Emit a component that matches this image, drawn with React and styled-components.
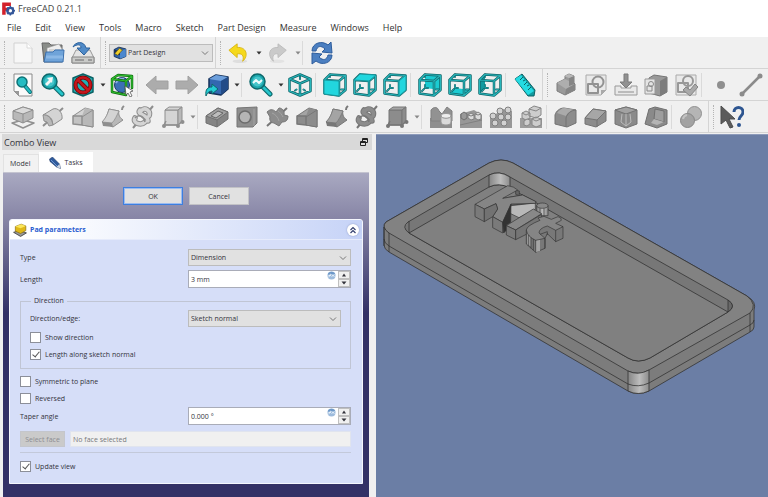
import React from 'react'
import styled, { createGlobalStyle, css } from 'styled-components'

const GlobalStyle = createGlobalStyle`
  *, *::before, *::after {
    box-sizing: border-box;
  }

  body {
    margin: 0;
    font-family: 'Open Sans', 'Noto Sans', sans-serif;
    font-size: 7px;
    color: #33333b;
    background-color: #f0f0f0;
  }

  button, input, select {
    margin: 0;
    font: inherit;
    color: inherit;
  }
`

const Window = styled.div`
  display: flex;
  flex-direction: column;
  min-height: 100vh;
`

const TitleBar = styled.header`
  display: flex;
  align-items: center;
  gap: 3px;
  height: 18px;
  padding-left: 1px;
  background-color: #fff;
`

const Title = styled.h1`
  margin: 0;
  font-size: 9px;
  font-weight: 400;
  line-height: 12px;
  color: #444;
`

const MenuBar = styled.nav`
  display: flex;
  height: 19px;
  background-color: #fff;
`

const MenuItem = styled.button`
  padding: 0 7px;
  border: 0;
  background: none;
  font-size: 9px;
  line-height: 18px;
  color: #333;
`

const ToolRow = styled.div`
  display: flex;
  height: 32px;
  border-bottom: 1px solid #d4d4d4;
  background-color: #f0f0f0;
`

const ToolGroup = styled.div`
  display: flex;
  align-items: center;
  padding-right: 2px;
  border-right: 1px solid #d4d4d4;

  &:last-child {
    border-right: 0;
  }
`

const Handle = styled.span`
  width: 8px;
  height: 24px;

  &::before {
    content: '';
    display: block;
    width: 1px;
    height: 24px;
    margin-left: 4px;
    border-left: 1px dotted #b4b4b4;
  }
`

const Divider = styled.span`
  width: 5px;
  height: 24px;
  border-left: 1px solid #dadada;
`

const Tool = styled.button`
  display: flex;
  align-items: center;
  justify-content: center;
  width: 30px;
  height: 30px;
  padding: 0;
  border: 0;
  background: none;
`

const DropButton = styled.button`
  display: flex;
  align-items: center;
  justify-content: center;
  width: 9px;
  height: 24px;
  padding: 0;
  border: 0;
  background: none;
  color: ${({ $muted }) => ($muted ? '#888' : '#333')};
`

const Workbench = styled.label`
  display: grid;
  align-items: center;
  width: 104px;
  height: 18px;

  > * {
    grid-area: 1 / 1;
  }

  > svg {
    pointer-events: none;
    margin-left: 4px;
  }

  > svg:last-child {
    justify-self: end;
    margin-right: 4px;
  }
`

const selectBox = css`
  width: 100%;
  height: 100%;
  border: 1px solid #bcbcbc;
  border-radius: 0;
  background-color: #e1e1e1;
  appearance: none;
`

const WorkbenchSelect = styled.select`
  ${selectBox}
  padding: 0 16px 0 18px;
`

const Main = styled.main`
  display: flex;
  flex: 1;
`

const Dock = styled.aside`
  display: flex;
  flex-direction: column;
  flex: none;
  width: 376px;
  padding: 1px 4px 0 2px;
`

const DockTitle = styled.div`
  display: flex;
  align-items: center;
  justify-content: space-between;
  height: 16px;
  padding: 0 4px 0 2px;
  background-color: #d9d9d9;
  font-size: 9px;
`

const FloatButton = styled.button`
  display: flex;
  padding: 0;
  border: 0;
  background: none;
`

const TabList = styled.div`
  display: flex;
  align-items: flex-end;
  height: 22px;
  padding-left: 1px;
`

const Tab = styled.button`
  display: flex;
  align-items: center;
  gap: 4px;
  height: ${({ $active }) => ($active ? 20 : 18)}px;
  padding: ${({ $active }) => ($active ? '0 9px' : '0 7px 0 6px')};
  border: 1px solid ${({ $active }) => ($active ? '#fff' : '#e2e2e2')};
  border-bottom: 0;
  background-color: ${({ $active }) => ($active ? '#fff' : '#f2f2f2')};
`

const TaskPanel = styled.section`
  flex: 1;
  margin: 0 3px 0 1px;
  padding: 14px 6px 12px;
  border-top: 1px solid #c4c4d0;
  background: linear-gradient(#a9a9c1 0, #8280a2 52px, #333166 140px);
`

const Buttons = styled.div`
  display: flex;
  justify-content: center;
  gap: 6px;
  margin-bottom: 14px;
`

const PushButton = styled.button`
  width: 60px;
  height: 18px;
  padding: 0;
  border: ${({ $primary }) => ($primary ? '1px solid #3d7fe0' : '1px solid #c2c2c6')};
  box-shadow: ${({ $primary }) => ($primary ? 'inset 0 0 0 1px #9cbcf0' : 'none')};
  background-color: #e1e1e1;
`

const Card = styled.div`
  border: 1px solid #f4f6fd;
  border-radius: 3px 3px 0 0;
  background-color: #d6def8;
`

const CardHeader = styled.div`
  display: flex;
  align-items: center;
  gap: 3px;
  height: 20px;
  padding: 0 3px;
  border-radius: 2px 2px 0 0;
  background: linear-gradient(90deg, #fff 10%, #c6d3f7);
  border-bottom: 1px solid #e6ebfb;
`

const CardTitle = styled.h2`
  flex: 1;
  margin: 0;
  font-size: 7px;
  font-weight: 700;
  color: #2a5cd0;
`

const CollapseButton = styled.button`
  display: flex;
  align-items: center;
  justify-content: center;
  width: 12px;
  height: 12px;
  padding: 0;
  border: 0;
  border-radius: 50%;
  background-color: #fff;
  box-shadow: 0 0 2px #8b98c4;
`

const Form = styled.form`
  padding: 9px 11px 8px 10px;
`

const Field = styled.div`
  display: grid;
  grid-template-columns: ${({ $inset }) => ($inset ? 158 : 168)}px 1fr;
  align-items: center;
  height: ${({ $tall }) => ($tall ? 18 : 17)}px;
  margin-bottom: ${({ $gap = 0 }) => $gap}px;
`

const SelectWrap = styled.div`
  display: grid;
  align-items: center;
  height: 17px;

  > * {
    grid-area: 1 / 1;
  }

  > svg {
    justify-self: end;
    margin-right: 4px;
    pointer-events: none;
  }
`

const Select = styled.select`
  ${selectBox}
  padding: 0 14px 0 2px;
`

const SpinBox = styled.div`
  display: flex;
  height: 18px;
  border: 1px solid #a9acb8;
  background-color: #fff;
`

const SpinInput = styled.input`
  flex: 1;
  min-width: 0;
  padding: 0 2px;
  border: 0;
  outline: 0;
  background: none;
`

const Stepper = styled.div`
  display: flex;
  flex-direction: column;
  width: 12px;
  margin-left: 2px;
`

const StepButton = styled.button`
  display: flex;
  flex: 1;
  align-items: center;
  justify-content: center;
  padding: 0;
  border: 1px solid #c0c0c0;
  background-color: #f0f0f0;
`

const Group = styled.fieldset`
  min-width: 0;
  margin: 8px 0 4px;
  padding: 4px 9px 5px;
  border: 1px solid #c0c5d4;
`

const Legend = styled.legend`
  margin-left: 1px;
  padding: 0 3px;
  line-height: 10px;
`

const CheckLabel = styled.label`
  display: flex;
  align-items: center;
  gap: 4px;
  height: 17px;
`

const CheckBox = styled.input`
  display: flex;
  align-items: center;
  justify-content: center;
  width: 11px;
  height: 11px;
  border: 1px solid #8c8f99;
  background-color: #fff;
  appearance: none;

  &:checked::after {
    content: '';
    width: 4px;
    height: 7px;
    margin-bottom: 2px;
    border: solid #555;
    border-width: 0 1px 1px 0;
    transform: rotate(40deg);
  }
`

const FaceRow = styled.div`
  display: flex;
  gap: 5px;
  height: 16px;
  margin-bottom: 5px;
`

const FaceButton = styled.button`
  width: 45px;
  padding: 0;
  border: 1px solid #c4c6cc;
  background-color: #cacaca;
  color: #8d8d92;
`

const FaceInput = styled.input`
  flex: 1;
  min-width: 0;
  padding: 0 2px;
  border: 1px solid #e0e4ee;
  background-color: #f0f0f0;

  &::placeholder {
    color: #77777c;
  }
`

const Rule = styled.hr`
  margin: 0 0 5px;
  border: 0;
  border-top: 1px solid #c3c9da;
`

const Viewport = styled.section`
  flex: 1;
  min-width: 0;
  margin-top: 1px;
  border-top: 1px solid #8d9bbb;
  background-color: #6b7ea5;

  > svg {
    display: block;
    width: 100%;
    height: auto;
  }
`

const Svg = ({ size = 24, children }) => (
  <svg width={ size } height={ size } viewBox="0 0 24 24" fill="none" strokeLinejoin="round" aria-hidden="true">
    { children }
  </svg>
)

const Chevron = () => (
  <svg width="8" height="8" viewBox="0 0 8 8" fill="none" stroke="#777" aria-hidden="true">
    <path d="M1 2.5 4 5.5 7 2.5" />
  </svg>
)

const Triangle = ({ up }) => (
  <svg width="6" height="4" viewBox="0 0 6 4" fill="currentColor" aria-hidden="true">
    <path d={ up ? 'M1 3.5 3 .5 5 3.5z' : 'M.5.5h5L3 3.5z' } />
  </svg>
)

const FormulaIcon = () => (
  <svg width="9" height="9" viewBox="0 0 9 9" fill="none" aria-hidden="true">
    <circle cx="4.5" cy="4.5" r="4" fill="#9dbbdc" />
    <path d="M.7 3.5a4 4 0 0 1 7.6 0z" fill="#6d98c8" />
    <path d="M1.5 6c1.5 0 1-3 2.500-3M1.500 4.500h2.500M4.500 3.500l3 2M7.500 3.500l-3 2" stroke="#e9f2fb" strokeWidth=".9" />
  </svg>
)

// Outlined strokes: dark edge with a brighter core on top
const Line = ({ d, dark = '#10666a', light = '#27b5ba', width = 2.5, core = 1.2 }) => (
  <>
    <path d={ d } stroke={ dark } strokeWidth={ width } strokeLinecap="round" />
    <path d={ d } stroke={ light } strokeWidth={ core } strokeLinecap="round" />
  </>
)

const cubeFaces = {
  front: 'M1 7 16 8V23L1 21z',
  top: 'M1 7 7 1 23 2 16 8z',
  right: 'M16 8 23 2V17L16 23z',
  rear: 'M7 1 23 2V17L7 15z',
  bottom: 'M1 21 7 15 23 17 16 23z',
  left: 'M1 7 7 1V15L1 21z',
}

const CubeView = ({ face }) => {
  const behind = ['rear', 'bottom', 'left'].includes(face)
  return (
    <Svg>
      { behind && <path d={ cubeFaces[face] } fill={ face === 'left' ? '#129aa0' : '#1ccbd2' } /> }
      <Line d="M7 1.500V4M7 12V15H10M4 18 6 16M18 16.500H21" width={ 1.8 } core={ .8 } />
      <Line d="M1.500 7 16 8V22.500L1.500 20.500zM1.500 7 7 1.500 22.500 2.500 16 8M22.500 2.500V17L16 22.500" />
      { !behind && <path d={ cubeFaces[face] } fill="#22d6de" stroke="#17979c" /> }
    </Svg>
  )
}

const Magnifier = ({ children }) => (
  <>
    <path d="m14 14 7 7" stroke="#0d686b" strokeWidth="5" strokeLinecap="round" />
    <path d="m14 14 7 7" stroke="#25c4ca" strokeWidth="2.800" strokeLinecap="round" />
    <circle cx="8.500" cy="8.500" r="7.500" fill="#1ba7ad" stroke="#0d686b" strokeWidth="1.500" />
    <circle cx="8.500" cy="8.500" r="5" fill="#45c5ca" />
    { children }
  </>
)

// Part features: additive tools are light, subtractive ones dark
const tone = dark => (dark ? ['#a4a4a4', '#8c8c8c', '#777'] : ['#d4d4d4', '#b8b8b8', '#8e8e8e'])

const Revolution = ({ dark }) => {
  const [a, b, c] = tone(dark)
  return (
    <Svg>
      <path d="M2 21 22 3" stroke={ c } strokeWidth="2" />
      { dark ? (
        <>
          <path d="M2 7c4-4 7-2 9 0l3-4c3 0 6 3 5 7l4 1c0 5-3 6-6 6l-3 4-5-3c-3 0-5-3-4-6z" fill={ b } stroke={ c } />
          <path d="M7 8c3 1 6 4 7 8M13 6c2 1 4 4 5 6" stroke={ a } />
        </>
      ) : (
        <>
          <path d="M2 10 12 4c5-2 10 4 9 10l-9 6-1-5c-2-4-5-5-9-5z" fill={ a } stroke={ c } />
          <path d="M2 10c5-1 9 4 10 10l-4 1-2-4-3-1z" fill={ b } stroke={ c } />
        </>
      ) }
    </Svg>
  )
}

const Loft = ({ dark }) => {
  const [a, b, c] = tone(dark)
  return (
    <Svg>
      <path d="m2 11 12-8 8 2v17l-11-2z" fill={ a } stroke={ c } />
      <path d="m11 11 3-8 8 2v17l-11-3z" fill={ b } />
      <path d="m2 11 9 1 11-7v17l-11-2z" stroke={ c } />
      <path d="M2 11h9v9l-9-1z" fill={ dark ? b : '#c2c2c2' } stroke={ c } strokeWidth="1.500" />
    </Svg>
  )
}

const Pipe = ({ dark }) => {
  const [a, b, c] = tone(dark)
  return (
    <Svg>
      <path d="M1 17C6 13 7 7 8 4l10 2c-1 4 1 7 4 9l-10 7z" fill={ b } stroke={ c } />
      <path d="M8 4c-1 4-3 9-7 13l10 1c3-3 5-8 7-12z" fill={ a } stroke={ c } strokeWidth=".8" />
      <path d="m1 17 1 4 10 1-1-4z" fill={ c } />
      <path d="M21 5c0-3 1-3 2-4" stroke={ c } strokeWidth="2" />
    </Svg>
  )
}

const Helix = ({ dark }) => {
  const [a, b, c] = tone(dark)
  return (
    <Svg>
      <path d="m2 23 5-6M17 7l5-6" stroke={ c } strokeWidth="2" />
      <path d="M4 13c-3 5 6 8 10 4M9 5c-4 5 8 4 8 11M10 6c4-5 10 0 8 5" stroke={ c } strokeWidth="5.500" strokeLinecap="round" />
      <path d="M4 13c-3 5 6 8 10 4M9 5c-4 5 8 4 8 11M10 6c4-5 10 0 8 5" stroke={ dark ? b : a } strokeWidth="3.500" strokeLinecap="round" />
      <path d="M4 13c4-5 9-1 10 4" stroke={ c } strokeWidth="1.500" />
    </Svg>
  )
}

const Primitive = ({ dark }) => {
  const [a, b, c] = tone(dark)
  return (
    <Svg>
      <path d="M4 5h13v15H4z" fill={ dark ? b : a } stroke={ c } />
      <path d="m4 5 4-3h13l-4 3z" fill={ a } stroke={ c } />
      <path d="m17 5 4-3v14l-4 4z" fill={ b } stroke={ c } />
      <path d="M3 20h14l5-4M3 20l2-4" stroke={ c } strokeWidth="1.500" />
      <g fill={ c }>
        <circle cx="3" cy="21" r="2" />
        <circle cx="17" cy="21" r="2" />
        <circle cx="21.500" cy="17" r="2" />
      </g>
    </Svg>
  )
}

const icons = {
  newFile: (
    <Svg>
      <path d="M3 2h13l5 5v15H3z" fill="#f7f7f7" stroke="#d2d2d2" />
      <path d="M16 2v5h5" fill="#fff" stroke="#dadada" />
    </Svg>
  ),
  open: (
    <Svg>
      <path d="M1 2h7l2 2h11v17H3z" fill="#8a8d89" stroke="#666" />
      <path d="m6 7 12-4 3 5v9H6z" fill="#eee" stroke="#999" strokeWidth=".6" />
      <path d="M8 9h11M8 11h10" stroke="#bbb" />
      <path d="M5 11h7l2-2h9l-1 12H3z" fill="#6fa3d9" stroke="#3c70ad" />
      <path d="M5 16h17" stroke="#8cb8e6" strokeWidth="3" />
    </Svg>
  ),
  save: (
    <Svg>
      <path d="m5 9-4 8v5h22v-5l-4-8z" fill="#e4e4e4" stroke="#999" />
      <path d="M1 16h22v6H1z" fill="#c9cac8" stroke="#858585" />
      <path d="M4 19h9M17 19h4" stroke="#8a8a8a" strokeWidth="1.500" />
      <path d="M2 6C4 1 13-1 15 7h4l-6 7-7-7h4C10 3 6 3 2 6z" fill="#4f8ac8" stroke="#2d629d" />
    </Svg>
  ),
  partDesign: (
    <Svg size={ 14 }>
      <path d="m2 6 8-4 12 3v13l-10 4L2 18z" fill="#2f62a8" stroke="#122d54" strokeWidth="1.500" />
      <path d="m12 9 10-4v13l-10 4z" fill="#4b88d0" />
      <path d="M2 6 12 9v7L2 13z" fill="#1d3157" />
      <path d="m3 13 8-9 5 3-8 9z" fill="#f0cf2a" stroke="#5b4c07" />
    </Svg>
  ),
  undo: (
    <Svg size={ 22 }>
      <ellipse cx="13" cy="21" rx="8" ry="2" fill="#dedede" />
      <path d="M1 9 10 2v4c10-1 13 9 6 15 2-6-1-9-6-8v4z" fill="#f5d91c" stroke="#d9b512" />
    </Svg>
  ),
  redo: (
    <Svg size={ 22 }>
      <ellipse cx="11" cy="21" rx="8" ry="2" fill="#e3e3e3" />
      <path d="m21 9-9-7v4C2 5 0 15 7 21c-2-6 1-9 5-8v4z" fill="#cacaca" stroke="#bbb" />
    </Svg>
  ),
  refresh: (
    <Svg>
      <path d="M2 10C2 2 12-1 18 4l3-3 1 11-10-1 3-3C11 4 7 5 6 10z" fill="#4b7fc1" stroke="#2e5d9c" />
      <path d="M22 14c0 8-10 11-16 6l-4 3V12l10 1-3 3c4 4 8 3 9-2z" fill="#4b7fc1" stroke="#2e5d9c" />
    </Svg>
  ),
  fitAll: (
    <Svg>
      <path d="M3 1h18v22H8l-5-5z" fill="#fafafa" stroke="#8a8a8a" />
      <path d="M3 18h5v5z" fill="#999" />
      <path d="m14 13 5 6" stroke="#0d7478" strokeWidth="4" strokeLinecap="round" />
      <path d="m14 13 5 6" stroke="#24bcc2" strokeWidth="2" strokeLinecap="round" />
      <circle cx="11" cy="9" r="5" fill="#26bcc2" stroke="#0d7478" strokeWidth="1.500" />
    </Svg>
  ),
  fitSelection: (
    <Svg>
      <Magnifier>
        <path d="m4 11 4-4-2-2 6-1-1 6-1-1-4 4z" fill="#f5f5f5" />
      </Magnifier>
    </Svg>
  ),
  drawStyle: (
    <Svg>
      <path d="m12 1 10 4v14l-10 4L2 19V5z" fill="#22aeb4" stroke="#0c6265" strokeWidth="1.500" />
      <circle cx="12" cy="12" r="7.500" stroke="#700" strokeWidth="4" />
      <path d="m6.500 6.500 11 11" stroke="#700" strokeWidth="4" />
      <circle cx="12" cy="12" r="7.500" stroke="#c4161c" strokeWidth="2.500" />
      <path d="m6.500 6.500 11 11" stroke="#c4161c" strokeWidth="2.500" />
    </Svg>
  ),
  boundingBox: (
    <Svg>
      <circle cx="12" cy="12" r="7.500" fill="#3b6fb5" stroke="#1f3f6c" />
      <path d="M6 10a7 7 0 0 1 8-4" stroke="#8ab0e0" strokeWidth="2" />
      <Line d="M2 6 16 8V22L2 19zM2 6 8 2 22 3 16 8M22 3V15" dark="#0f6a10" light="#2fc02f" />
      <path d="m15 13 8 5-3 1 2 4-2 1-2-4-2 2z" fill="#fff" stroke="#555" strokeWidth=".8" />
    </Svg>
  ),
  back: (
    <Svg><path d="M1 12 11 3v5h12v8H11v5z" fill="#acacac" stroke="#a0a0a0" /></Svg>
  ),
  forward: (
    <Svg><path d="M23 12 13 3v5H1v8h12v5z" fill="#acacac" stroke="#a0a0a0" /></Svg>
  ),
  linkGo: (
    <Svg>
      <path d="m4 6 7-4 12 2v12l-7 6-12-2z" fill="#3368b0" stroke="#142f57" strokeWidth="1.500" />
      <path d="m4 6 7-4 12 2-7 4z" fill="#6c9fdc" />
      <path d="m16 8 7-4v12l-7 6z" fill="#234c88" />
      <path d="M1 23c-1-7 2-9 6-9v-3l6 5-6 5v-3c-3 0-5 2-6 5z" fill="#24cdd4" stroke="#0e686b" />
    </Svg>
  ),
  zoom: (
    <Svg>
      <Magnifier>
        <path d="M4 10 7 7l3 3 3-3" stroke="#eafcfc" strokeWidth="2" />
      </Magnifier>
    </Svg>
  ),
  isometric: (
    <Svg>
      <Line d="M12 2V6M7 17.500l1.500-1M17 17.500l-1.500-1" width={ 2 } core={ .8 } />
      <Line d="m12 1.500 10.500 4.500v12l-10.500 4.500L1.500 18V6zM1.500 6l10.500 4.500 10.500-4.500M12 10.500v12" />
    </Svg>
  ),
  measure: (
    <Svg>
      <path d="M2 6 9 1l13 16-1 6h-6z" fill="#129aa0" stroke="#0c6265" />
      <path d="M2 6 8 2l13 16-6 4z" fill="#25dbe2" />
      <path d="m10 4-3 3M12 7l-2 1M14 9l-3 3M16 12l-2 1M18 14l-3 3" stroke="#0c6265" />
    </Svg>
  ),
  body: (
    <Svg>
      <path d="m3 10 8-4V3l4-2 5 2v7l1 1v6l-10 5-8-4z" fill="#999" stroke="#7d7d7d" />
      <path d="m3 10 8-4 4 2v5l6-2-9 5z" fill="#aeaeae" />
      <path d="m12 16 9-5v6l-10 5zM15 5l5-2v8l-5 2z" fill="#858585" />
      <path d="m10 3 5-2 5 2-5 2z" fill="#b8b8b8" />
    </Svg>
  ),
  newSketch: (
    <Svg>
      <path d="M2 2h20v15l-5 5H2z" fill="#e9e9e9" stroke="#aaa" />
      <circle cx="14" cy="9" r="5.500" stroke="#929292" strokeWidth="2" />
      <path d="M4 11h10v9H4z" stroke="#929292" strokeWidth="2" />
      <path d="M17 22v-5h5z" fill="#aaa" />
    </Svg>
  ),
  editSketch: (
    <Svg>
      <path d="M1 13h6v2h10v-2h6v9H1z" fill="#e9e9e9" stroke="#999" />
      <path d="M4 19h16" stroke="#bbb" strokeWidth="2" />
      <path d="M10 1h4v8h4l-6 6-6-6h4z" fill="#919191" stroke="#7b7b7b" />
    </Svg>
  ),
  mapSketch: (
    <Svg>
      <path d="m5 5 5-3 13 2v15l-7 4-11-3z" fill="#999" stroke="#757575" />
      <path d="m16 8 7-4v15l-7 4z" fill="#7c7c7c" />
      <path d="M1 6h10v15H1z" fill="#e4e4e4" stroke="#999" />
      <circle cx="7" cy="11" r="2.500" stroke="#888" />
      <path d="M3 13h5v5H3z" stroke="#888" />
    </Svg>
  ),
  validateSketch: (
    <Svg>
      <path d="M2 2h20v20H2z" fill="#e9e9e9" stroke="#aaa" />
      <circle cx="14" cy="8" r="5" stroke="#989898" strokeWidth="2" />
      <path d="M4 10h10v9H4z" stroke="#989898" strokeWidth="2" />
      <path d="m9 17 3-3 4 3 5-6 3 3-8 9z" fill="#a9a9a9" stroke="#858585" />
    </Svg>
  ),
  point: (
    <Svg><circle cx="12" cy="12" r="4" fill="#8f8f8f" /></Svg>
  ),
  line: (
    <Svg>
      <path d="M3 21 21 3" stroke="#8b8b8b" strokeWidth="2.500" />
      <circle cx="3" cy="21" r="2.500" fill="#8b8b8b" />
      <circle cx="21" cy="3" r="2.500" fill="#8b8b8b" />
    </Svg>
  ),
  pad: (
    <Svg>
      <path d="m1 18 11-3 11 3-11 5z" fill="#f0f0f0" stroke="#909090" strokeWidth="1.500" />
      <path d="m2 6 10-4 10 3v8l-10 5-10-4z" fill="#b8b8b8" stroke="#8e8e8e" />
      <path d="m2 6 10-4 10 3-10 4z" fill="#dadada" stroke="#8e8e8e" />
      <path d="M12 9v9" stroke="#8e8e8e" />
    </Svg>
  ),
  pocket: (
    <Svg>
      <path d="m1 11 12-8 10 4v7l-11 8-11-4z" fill="#858585" stroke="#707070" />
      <path d="m1 11 12-8 10 4-11 8z" fill="#a0a0a0" stroke="#707070" />
      <path d="m6 11 7-5 5 2-7 5z" fill="#bcbcbc" stroke="#666" />
      <path d="M12 15v7" stroke="#707070" />
    </Svg>
  ),
  hole: (
    <Svg>
      <path d="m2 3 20-1v16l-4 4H2z" fill="#8e8e8e" stroke="#757575" />
      <path d="M19 4v17" stroke="#a2a2a2" />
      <circle cx="10" cy="12" r="6" fill="#b5b5b5" stroke="#6c6c6c" strokeWidth="1.500" />
      <path d="M13 7a6 6 0 0 1 0 10 8 8 0 0 0 0-10z" fill="#757575" />
    </Svg>
  ),
  mirror: (
    <Svg>
      <path d="M1 13h22v10H1z" fill="#8e8e8e" />
      <path d="M2 5c3-4 7-3 8 1l3 3 5-7 5 4v10H2z" fill="#929292" stroke="#808080" />
      <ellipse cx="17" cy="11" rx="5" ry="2.500" fill="#eee" stroke="#999" />
      <path d="M12 11v6c0 4 10 4 10 0v-6c0 3-10 3-10 0z" fill="#dadada" stroke="#999" />
    </Svg>
  ),
  linear: (
    <Svg>
      <path d="M1 9 15 5l8 5v13H1z" fill="#979797" />
      <path d="m1 20 22-5" stroke="#808080" />
      <path d="m2 9 3-2 3 2v4l-3 2-3-2z" fill="#999" stroke="#6f6f6f" />
      <g fill="#dadada" stroke="#808080">
        <path d="m9 10 3-2 3 2v4l-3 1-3-2zM16 9l3-2 3 2v5l-3 1-3-2z" />
        <path d="m9 10 3 1 3-1M16 9l3 1 3-1" />
      </g>
    </Svg>
  ),
  polar: (
    <Svg>
      <path d="m1 13 13-9 9 2v17H1z" fill="#979797" />
      <g fill="#d2d2d2" stroke="#808080">
        <circle cx="4" cy="11" r="3" /><circle cx="11" cy="6" r="3" /><circle cx="19" cy="5" r="3" />
        <circle cx="12" cy="12" r="3" /><circle cx="19" cy="12" r="3" /><circle cx="6" cy="18" r="3" />
        <circle cx="15" cy="18" r="3" />
      </g>
    </Svg>
  ),
  multi: (
    <Svg>
      <path d="M1 13h22v10H1z" fill="#9d9d9d" />
      <g fill="#cdcdcd" stroke="#868686">
        <path d="m10 4 5-3 7 2v7l-5 3-7-2zM3 8l4-2 4 2v5l-4 2-4-2zM13 14l4-2 5 2v6l-5 2-4-2z" />
        <path d="m10 4 7 2 5-3M3 8l4 2 4-2M13 14l4 2 5-2" />
        <path d="m5 16 3-2 3 1v4l-3 2-3-1z" />
      </g>
    </Svg>
  ),
  fillet: (
    <Svg>
      <path d="M1 10c1-4 5-7 9-7l12 2v13l-9 4-12-3z" fill="#8c8c8c" stroke="#737373" />
      <path d="M3 8c2-3 5-5 8-5l10 2c-4 0-8 3-9 6z" fill="#aaa" />
      <path d="M12 22V13c1-4 5-8 10-8" stroke="#737373" />
    </Svg>
  ),
  chamfer: (
    <Svg>
      <path d="m1 13 8-9 13 2v10l-10 6-11-3z" fill="#8c8c8c" stroke="#737373" />
      <path d="m1 13 8-9 13 2-9 9z" fill="#a6a6a6" stroke="#737373" />
      <path d="M13 15v7" stroke="#737373" />
    </Svg>
  ),
  draft: (
    <Svg>
      <path d="m1 5 11-3 11 3v14l-11 4-11-4z" fill="#8a8a8a" stroke="#737373" />
      <path d="m1 5 11-3 11 3-11 4z" fill="#a2a2a2" stroke="#737373" />
      <path d="M12 9v12M8 9l-1 8M16 9l1 8M7 17l5 4 5-4" stroke="#bcbcbc" />
    </Svg>
  ),
  thickness: (
    <Svg>
      <path d="m5 4 6-2 12 3v14l-10 4-12-4z" fill="#8a8a8a" stroke="#707070" />
      <path d="m11 4-1 10 10 3V6z" fill="#9e9e9e" stroke="#707070" />
      <path d="m10 14-3 4 6 2 7-3z" fill="#b4b4b4" />
    </Svg>
  ),
  boolean: (
    <Svg>
      <circle cx="15.500" cy="8.500" r="7" fill="#b5b5b5" stroke="#909090" />
      <circle cx="8.500" cy="15.500" r="7" fill="#a2a2a2" stroke="#868686" />
      <path d="M4 14a5 5 0 0 1 4-4" stroke="#c2c2c2" strokeWidth="2" />
    </Svg>
  ),
  whatsThis: (
    <Svg>
      <path d="M1 1 15 14H9l4 8-3 1-4-8-5 4z" fill="#5c5c5c" stroke="#4c4c4c" />
      <path d="M14 7c0-6 9-6 9 0 0 4-4 4-4 8" stroke="#2d5590" strokeWidth="3" />
      <circle cx="19" cy="20" r="2" fill="#2d5590" />
    </Svg>
  ),
}

const menus = ['File', 'Edit', 'View', 'Tools', 'Macro', 'Sketch', 'Part Design', 'Measure', 'Windows', 'Help']

const viewTools = [
  ['Fit all', icons.fitAll],
  ['Fit selection', icons.fitSelection],
  ['Draw style', icons.drawStyle],
  'drop',
  ['Bounding box', icons.boundingBox],
  'divider',
  ['Go back', icons.back],
  ['Go forward', icons.forward],
  ['Go to linked object', icons.linkGo],
  'drop',
  'divider',
  ['Zoom', icons.zoom],
  'drop',
  ['Isometric', icons.isometric],
  'divider',
  ['Front', <CubeView face="front" />],
  ['Top', <CubeView face="top" />],
  ['Right', <CubeView face="right" />],
  'divider',
  ['Rear', <CubeView face="rear" />],
  ['Bottom', <CubeView face="bottom" />],
  ['Left', <CubeView face="left" />],
  'divider',
  ['Measure distance', icons.measure],
]

const sketchTools = [
  ['Create body', icons.body],
  ['Create sketch', icons.newSketch],
  ['Edit sketch', icons.editSketch],
  ['Map sketch', icons.mapSketch],
  ['Validate sketch', icons.validateSketch],
  'divider',
  ['Datum point', icons.point],
  ['Datum line', icons.line],
]

const featureTools = [
  ['Pad', icons.pad],
  ['Revolution', <Revolution />],
  ['Additive loft', <Loft />],
  ['Additive pipe', <Pipe />],
  ['Additive helix', <Helix />],
  ['Additive primitive', <Primitive />],
  'mutedDrop',
  'divider',
  ['Pocket', icons.pocket],
  ['Hole', icons.hole],
  ['Groove', <Revolution dark />],
  ['Subtractive loft', <Loft dark />],
  ['Subtractive pipe', <Pipe dark />],
  ['Subtractive helix', <Helix dark />],
  ['Subtractive primitive', <Primitive dark />],
  'mutedDrop',
  'divider',
  ['Mirrored', icons.mirror],
  ['Linear pattern', icons.linear],
  ['Polar pattern', icons.polar],
  ['Multi transform', icons.multi],
  'divider',
  ['Fillet', icons.fillet],
  ['Chamfer', icons.chamfer],
  ['Draft', icons.draft],
  ['Thickness', icons.thickness],
  'divider',
  ['Boolean', icons.boolean],
]

const fileTools = [
  ['New', icons.newFile],
  ['Open', icons.open],
  ['Save', icons.save],
]

const editTools = [
  ['Undo', icons.undo],
  'drop',
  ['Redo', icons.redo],
  'mutedDrop',
  'divider',
  ['Refresh', icons.refresh],
]

const Tools = ({ items }) => (
  <ToolGroup role="toolbar">
    <Handle />
    { items.map((item, i) => {
      if (item === 'divider') return <Divider key={ i } />
      if (item === 'drop' || item === 'mutedDrop') {
        return (
          <DropButton key={ i } $muted={ item === 'mutedDrop' } aria-label="More">
            <Triangle />
          </DropButton>
        )
      }
      const [label, icon] = item
      return <Tool key={ i } aria-label={ label }>{ icon }</Tool>
    }) }
  </ToolGroup>
)

const Check = ({ children, ...props }) => (
  <CheckLabel>
    <CheckBox type="checkbox" { ...props } />
    { children }
  </CheckLabel>
)

const SelectField = ({ id, label, value, ...props }) => (
  <Field { ...props }>
    <label htmlFor={ id }>{ label }</label>
    <SelectWrap>
      <Select id={ id } defaultValue={ value }>
        <option>{ value }</option>
      </Select>
      <Chevron />
    </SelectWrap>
  </Field>
)

const SpinField = ({ id, label, value, ...props }) => (
  <Field $tall { ...props }>
    <label htmlFor={ id }>{ label }</label>
    <SpinBox>
      <SpinInput id={ id } defaultValue={ value } />
      <FormulaIcon />
      <Stepper>
        <StepButton type="button" aria-label={ `Increase ${label}` }><Triangle up /></StepButton>
        <StepButton type="button" aria-label={ `Decrease ${label}` }><Triangle /></StepButton>
      </Stepper>
    </SpinBox>
  </Field>
)

const Model = () => (
  <svg viewBox="0 0 392 362" fill="none" stroke="#333" strokeWidth=".8" strokeLinejoin="round" role="img" aria-label="Tray with raised letters">
    <defs>
      <linearGradient id="corner">
        <stop offset="0" stopColor="#858585" />
        <stop offset=".55" stopColor="#bdbdbd" />
        <stop offset="1" stopColor="#8c8c8c" />
      </linearGradient>
    </defs>
    <path d="M13 98Q5 92 10 87L113 28Q125 22 137 28L371 161Q381 167 378 175V192Q378 195 374 197L273 256Q262 261 252 256L13 117Q8 114 8 110V92" fill="#7c7c7c" />
    <path d="M113 28 10 87Q5 92 13 98L252 236Q262 241 273 235L374 178Q382 170 371 161L137 28Q125 22 113 28z" fill="#828282" />
    <path d="M252 236Q262 241 273 235V256Q262 261 252 256z" fill="url(#corner)" />
    <path d="M8 104Q8 108 13 111L252 249Q262 253 273 248L374 190Q378 188 378 185" />
    <path d="M13 98V117M374 178V197M8 92V111" />
    <path d="M113 40 32 87Q25 92 33 98L252 223Q262 229 274 223L352 177Q361 171 352 165L134 42Q123 35 113 40z" fill="#777" />
    <path d="M33 98 113 52Q123 47 134 53L352 177 274 223Q262 229 252 223z" fill="#808080" />
    <path d="M113 40Q123 35 134 42V53Q123 47 113 52z" fill="url(#corner)" />
    <path d="M352 165V177Q361 171 352 165z" fill="#686868" />
    <path d="M33 86V98" />
    <g transform="translate(88 40) scale(.3333)" strokeWidth="2">
      <path d="M218 92V122H252V92z" fill="url(#corner)" />
      <ellipse cx="235" cy="92" rx="17" ry="8" fill="#888" />
      <path d="M228 100V122M240 100V122" />
      <path d="M155 46V58L166 62V48z" fill="#666" />
      <path d="M116 70 176 60 216 80 214 86 141 90z" fill="#828282" />
      <path d="M141 92 214 84V103L165 128 132 112z" fill="#b8b8b8" />
      <path d="M33 88 131 32Q150 34 161 45L116 70 176 60 216 80 214 85 141 87 116 142 86 125 101 102 96 86 61 102z" fill="#858585" />
      <path d="M33 88 61 102V140L33 125zM86 125 116 142V174L86 158z" fill="#7a7a7a" />
      <path d="M61 102 96 86 101 102 86 125 61 140z" fill="#727272" />
      <path d="M141 88 116 142 119 174 127 166V150L140 142z" fill="#333" />
      <path d="M127 152 208 102 233 116 155 165z" fill="#888" />
      <path d="M127 152 155 165V194L127 180z" fill="#797979" />
      <path d="M155 165 233 118V150L187 178 155 194z" fill="#757575" />
      <path d="M187 165V207L215 232 243 220V190L250 176 275 200 297 190V155L240 150z" fill="#787878" />
      <path d="M190 168V208L200 214V180zM215 195V232L228 228V190z" fill="#a5a5a5" stroke="none" />
      <path d="M187 165Q188 152 228 136L222 129 240 124 262 133 282 125Q293 127 292 136L275 145 297 155 275 166 250 153Q225 160 225 174L243 190 215 196Q190 185 187 165z" fill="#858585" />
      <path d="M194 180V212M201 187V220M208 192V226M215 195V232M243 190V220M275 166V200M228 178 250 170V180" />
    </g>
  </svg>
)

const App = () => (
  <Window>
    <GlobalStyle />
    <TitleBar>
      <Svg size={ 14 }>
        <path d="M2 1h15v6H8v3h6v5H8v7H2z" fill="#d3202a" />
        <circle cx="16" cy="15" r="5" stroke="#35589a" strokeWidth="4" />
        <path d="M16 7v3M16 20v3M8 15h3M21 15h3M10.500 9.500l2 2M19.500 18.500l2 2M10.500 20.500l2-2M19.500 11.500l2-2" stroke="#35589a" strokeWidth="2.500" />
      </Svg>
      <Title>FreeCAD 0.21.1</Title>
    </TitleBar>
    <MenuBar>
      { menus.map(menu => <MenuItem key={ menu }>{ menu }</MenuItem>) }
    </MenuBar>
    <ToolRow>
      <Tools items={ fileTools } />
      <ToolGroup>
        <Handle />
        <Workbench>
          <WorkbenchSelect aria-label="Workbench" defaultValue="Part Design">
            <option>Part Design</option>
          </WorkbenchSelect>
          { icons.partDesign }
          <Chevron />
        </Workbench>
      </ToolGroup>
      <Tools items={ editTools } />
    </ToolRow>
    <ToolRow>
      <Tools items={ viewTools } />
      <Tools items={ sketchTools } />
    </ToolRow>
    <ToolRow>
      <Tools items={ featureTools } />
      <Tools items={ [["What's this?", icons.whatsThis]] } />
    </ToolRow>
    <Main>
      <Dock>
        <DockTitle>
          Combo View
          <FloatButton aria-label="Float panel">
            <svg width="8" height="8" viewBox="0 0 8 8" fill="#ddd" stroke="#222" aria-hidden="true">
              <path d="M2.500.500h5v4h-5zM2.500 1.500h5M.500 3.500h5v4h-5zM.500 4.500h5" />
            </svg>
          </FloatButton>
        </DockTitle>
        <TabList role="tablist">
          <Tab role="tab" aria-selected="false">Model</Tab>
          <Tab role="tab" aria-selected="true" $active>
            <Svg size={ 12 }>
              <path d="m1 4 6-4 14 14 2 9-8-3L2 9z" fill="#2f5a9c" stroke="#1c3560" />
              <path d="m4 6 13 13" stroke="#6f97cf" strokeWidth="2" />
              <path d="m15 20 6-6 2 9z" fill="#cfd6e2" />
            </Svg>
            Tasks
          </Tab>
        </TabList>
        <TaskPanel>
          <Buttons>
            <PushButton $primary>OK</PushButton>
            <PushButton>Cancel</PushButton>
          </Buttons>
          <Card>
            <CardHeader>
              <Svg size={ 14 }>
                <path d="m1 16 10-3 12 4-10 6z" fill="#999" stroke="#444" strokeWidth="1.500" />
                <path d="m4 6 10-4 8 3v8l-9 5-9-4z" fill="#e0b818" stroke="#7a610a" />
                <path d="m4 6 10-4 8 3-9 4z" fill="#fbe65a" />
              </Svg>
              <CardTitle>Pad parameters</CardTitle>
              <CollapseButton aria-label="Collapse">
                <svg width="8" height="8" viewBox="0 0 8 8" fill="none" stroke="#333f6e" strokeWidth="1.200" aria-hidden="true">
                  <path d="M1.500 4 4 1.500 6.500 4M1.500 7 4 4.500 6.500 7" />
                </svg>
              </CollapseButton>
            </CardHeader>
            <Form>
              <SelectField id="type" label="Type" value="Dimension" $gap={ 4 } />
              <SpinField id="length" label="Length" value="3 mm" />
              <Group>
                <Legend>Direction</Legend>
                <SelectField id="direction" label="Direction/edge:" value="Sketch normal" $inset $gap={ 2 } />
                <Check>Show direction</Check>
                <Check defaultChecked>Length along sketch normal</Check>
              </Group>
              <Check>Symmetric to plane</Check>
              <Check>Reversed</Check>
              <SpinField id="taper" label="Taper angle" value="0.000 °" $gap={ 6 } />
              <FaceRow>
                <FaceButton type="button" disabled>Select face</FaceButton>
                <FaceInput aria-label="Selected face" placeholder="No face selected" disabled />
              </FaceRow>
              <Rule />
              <Check defaultChecked>Update view</Check>
            </Form>
          </Card>
        </TaskPanel>
      </Dock>
      <Viewport>
        <Model />
      </Viewport>
    </Main>
  </Window>
)

export default App
